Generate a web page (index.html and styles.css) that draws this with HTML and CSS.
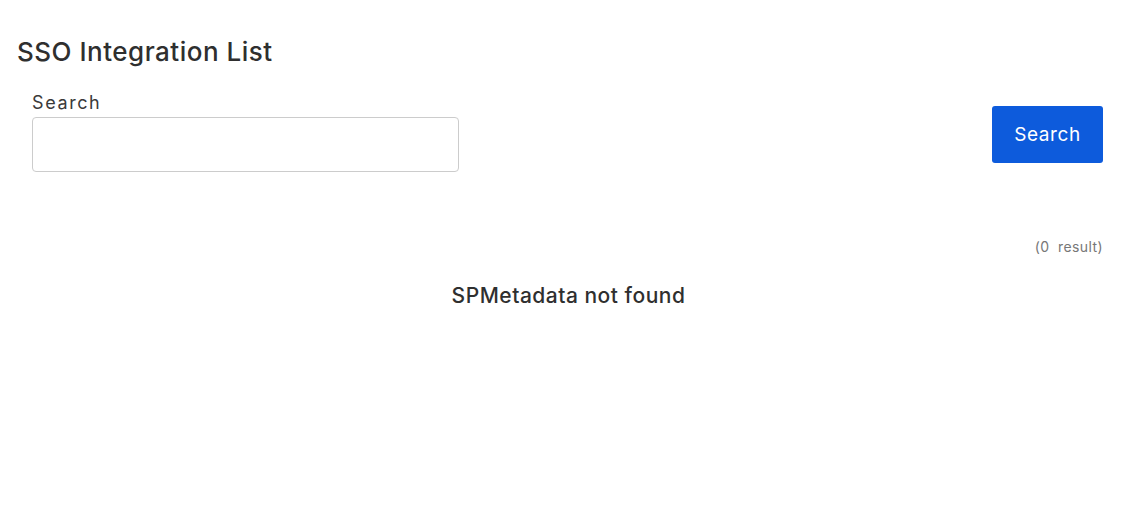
FILE: index.html
```html
<!DOCTYPE html>
<html>
<head>
<meta charset="utf-8">
<link rel="stylesheet" href="styles.css">
</head>
<body>
<div class="page">
  <h2 class="title">SSO Integration List</h2>
  <div class="search-row">
    <div class="field">
      <label class="label" for="q">Search</label>
      <input id="q" class="input" type="text">
    </div>
    <button class="btn">Search</button>
  </div>
  <div class="count">(0&nbsp; result)</div>
  <div class="empty">SPMetadata not found</div>
</div>
</body>
</html>
```
FILE: styles.css
```css
html, body {
  margin: 0;
  padding: 0;
  background: #fff;
}
body {
  font-family: Inter, "Open Sans", sans-serif;
  color: #333;
}
.page {
  padding: 36px 25px 0 17px;
}
.title {
  margin: 0;
  font-size: 26px;
  font-weight: 500;
  line-height: 32px;
  color: #2f2f2f;
  letter-spacing: 0.5px;
}
.search-row {
  display: flex;
  justify-content: space-between;
  align-items: flex-start;
  padding-left: 15px;
  margin-top: 23px;
}
.field {
  display: flex;
  flex-direction: column;
}
.label {
  font-size: 18px;
  line-height: 24px;
  color: #3a3a3a;
  letter-spacing: 1.6px;
  margin-bottom: 2px;
}
.input {
  width: 427px;
  height: 55px;
  box-sizing: border-box;
  border: 1px solid #ccc;
  border-radius: 4px;
  outline: none;
  margin: 0;
}
.btn {
  width: 111px;
  height: 57px;
  margin-top: 15px;
  background: #0d5bdc;
  color: #fff;
  border: none;
  border-radius: 3px;
  font-family: inherit;
  font-size: 19px;
  font-weight: 400;
  letter-spacing: 0.6px;
}
.count {
  text-align: right;
  font-size: 14px;
  color: #777;
  margin-top: 65px;
  line-height: 20px;
  letter-spacing: 0.4px;
}
.empty {
  text-align: center;
  font-size: 21px;
  font-weight: 500;
  color: #2f2f2f;
  line-height: 26px;
  margin-top: 26px;
  padding-left: 17px;
  letter-spacing: 0.5px;
}
```
